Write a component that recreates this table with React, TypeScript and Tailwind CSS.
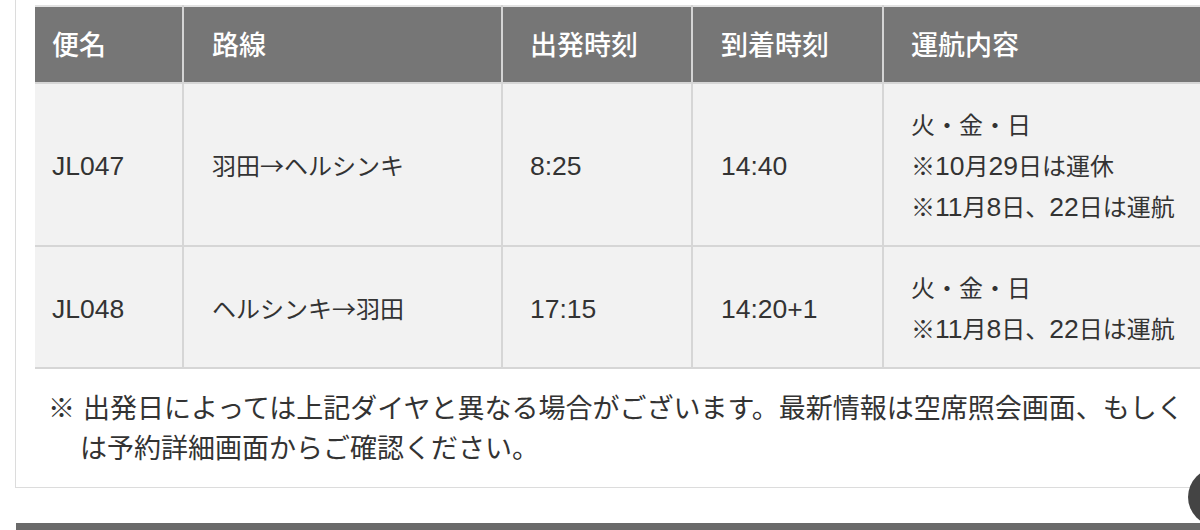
import React from "react";

const rows = [
  {
    no: "JL047",
    route: "羽田→ヘルシンキ",
    dep: "8:25",
    arr: "14:40",
    notes: ["火・金・日", "※10月29日は運休", "※11月8日、22日は運航"],
  },
  {
    no: "JL048",
    route: "ヘルシンキ→羽田",
    dep: "17:15",
    arr: "14:20+1",
    notes: ["火・金・日", "※11月8日、22日は運航"],
  },
];

function Mixed({ text }: { text: string }) {
  const parts = text.split(/([0-9A-Za-z:+]+)/).filter((p) => p !== "");
  return (
    <>
      {parts.map((p, i) =>
        /^[0-9A-Za-z:+]+$/.test(p) ? (
          <span
            key={i}
            className="text-[26.5px] leading-none"
            style={{ fontFamily: '"Liberation Sans", Arial, sans-serif' }}
          >
            {p}
          </span>
        ) : (
          <span key={i}>{p}</span>
        )
      )}
    </>
  );
}

export default function App() {
  return (
    <div
      className="relative w-[1200px] h-[530px] overflow-hidden bg-white text-[#333]"
      style={{ fontFamily: '"Noto Sans CJK JP", "Noto Sans", sans-serif' }}
    >
      <div className="ml-[15px] w-[1400px] border-l border-b border-[#dcdcdc] pl-[19px] pt-[5px]">
        <table className="table-fixed border-collapse border-t-2 border-[#e2e2e2] w-[1340px]">
          <colgroup>
            <col className="w-[148px]" />
            <col className="w-[319px]" />
            <col className="w-[190px]" />
            <col className="w-[191px]" />
            <col className="w-[492px]" />
          </colgroup>
          <thead>
            <tr className="h-[77px] bg-[#767676] text-white text-[27px]">
              <th className="text-left font-medium pl-[17px] border-r-2 border-[#d4d4d4]">便名</th>
              <th className="text-left font-medium pl-[28px] border-r-2 border-[#d4d4d4]">路線</th>
              <th className="text-left font-medium pl-[27px] border-r-2 border-[#d4d4d4]">出発時刻</th>
              <th className="text-left font-medium pl-[28px] border-r-2 border-[#d4d4d4]">到着時刻</th>
              <th className="text-left font-medium pl-[27px]">運航内容</th>
            </tr>
          </thead>
          <tbody className="bg-[#f2f2f2] text-[24px] leading-[41px]">
            {rows.map((r) => (
              <tr key={r.no} className="border-t-2 border-[#d6d6d6]">
                <td className="pl-[17px] align-middle border-r-2 border-[#d6d6d6]">
                  <Mixed text={r.no} />
                </td>
                <td className="pl-[28px] align-middle border-r-2 border-[#d6d6d6]">{r.route}</td>
                <td className="pl-[27px] align-middle border-r-2 border-[#d6d6d6]">
                  <Mixed text={r.dep} />
                </td>
                <td className="pl-[28px] align-middle border-r-2 border-[#d6d6d6]">
                  <Mixed text={r.arr} />
                </td>
                <td className="pl-[27px] py-[19px] align-middle">
                  {r.notes.map((n) => (
                    <div key={n}>
                      <Mixed text={n} />
                    </div>
                  ))}
                </td>
              </tr>
            ))}
            <tr className="border-t-2 border-[#d6d6d6] h-0"></tr>
          </tbody>
        </table>
        <p className="text-[27px] leading-[40px] pt-[19px] pb-[20px] pl-[45px] -indent-[32px] whitespace-nowrap">
          ※<span className="inline-block w-[8px]"></span>出発日によっては上記ダイヤと異なる場合がございます。最新情報は空席照会画面、もしく
          <br />
          は予約詳細画面からご確認ください。
        </p>
      </div>
      <div className="ml-[16px] mt-[35px] h-[10px] bg-[#6a6a6a]"></div>
      <div className="absolute left-[1188px] top-[468px] w-[58px] h-[58px] rounded-full bg-[#444]"></div>
    </div>
  );
}
